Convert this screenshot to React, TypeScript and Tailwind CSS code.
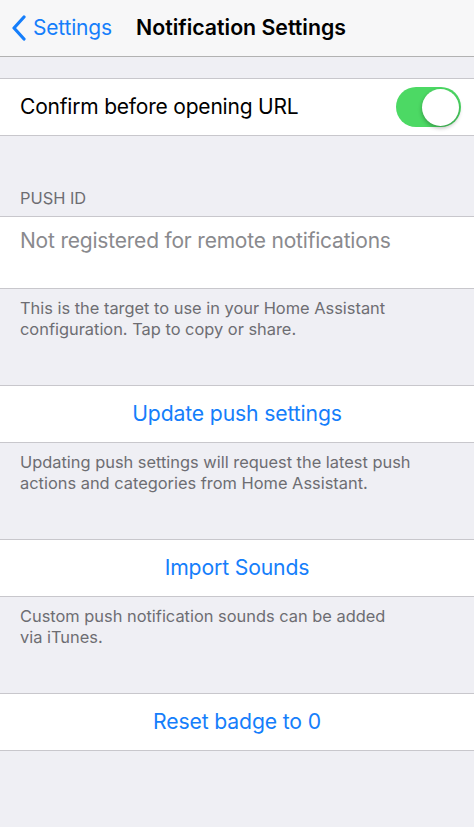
import React from "react";

const font = { fontFamily: '"Inter", "Helvetica Neue", Arial, sans-serif' };

function Footer({ lines }: { lines: string[] }) {
  return (
    <div className="px-5 pt-[9px] text-[16.4px] leading-[20.5px] text-[#6d6d72] h-[96px]">
      {lines.map((l) => (
        <div key={l}>{l}</div>
      ))}
    </div>
  );
}

function ActionRow({ label }: { label: string }) {
  return (
    <button className="w-full h-[58px] bg-white border-y border-[#c8c7cc] flex items-center justify-center text-[21.2px] text-[#157efb] tracking-[-0.15px]">
      {label}
    </button>
  );
}

export default function App() {
  return (
    <div className="w-[474px] h-[827px] bg-[#efeff4] overflow-hidden" style={font}>
      {/* navigation bar */}
      <header className="relative h-[57px] bg-[#f7f7f8] border-b border-[#b2b2b2] flex items-center">
        <button className="flex items-center pl-[11px] text-[#157efb] text-[21px] tracking-[-0.2px]">
          <svg width="16" height="26" viewBox="0 0 16 26" className="mr-[6px]">
            <path d="M13 2 L3 13 L13 24" fill="none" stroke="#157efb" strokeWidth="3.2" strokeLinecap="round" strokeLinejoin="round" />
          </svg>
          Settings
        </button>
        <h1 className="absolute left-[136px] text-[21.3px] font-semibold text-black">
          Notification Settings
        </h1>
      </header>

      <div className="h-[21px]" />

      {/* toggle row */}
      <div className="h-[58px] bg-white border-y border-[#c8c7cc] flex items-center justify-between pl-5 pr-[13px]">
        <span className="text-[21px] text-black tracking-[-0.2px]">Confirm before opening URL</span>
        <div className="relative w-[65px] h-[40px] rounded-full bg-[#4cd964]">
          <div className="absolute right-[2px] top-[1.5px] w-[37px] h-[37px] rounded-full bg-white shadow-[0_2px_4px_rgba(0,0,0,0.3)]" />
        </div>
      </div>

      {/* push id section */}
      <div className="h-[80px] flex items-end px-5 pb-[8px]">
        <span className="text-[16.4px] leading-[20px] text-[#6d6d72]">PUSH ID</span>
      </div>
      <div className="h-[73px] bg-white border-y border-[#c8c7cc] px-5 pt-[11px]">
        <span className="text-[21px] leading-[26px] text-[#8a8a8e] tracking-[-0.2px]">
          Not registered for remote notifications
        </span>
      </div>
      <Footer lines={["This is the target to use in your Home Assistant", "configuration. Tap to copy or share."]} />

      <ActionRow label="Update push settings" />
      <Footer lines={["Updating push settings will request the latest push", "actions and categories from Home Assistant."]} />

      <ActionRow label="Import Sounds" />
      <Footer lines={["Custom push notification sounds can be added", "via iTunes."]} />

      <ActionRow label="Reset badge to 0" />
    </div>
  );
}
